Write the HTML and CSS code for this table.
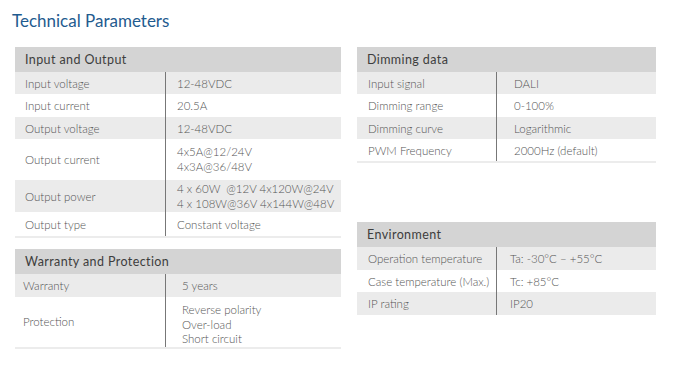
FILE: index.html
```html
<!DOCTYPE html>
<html>
<head>
<meta charset="utf-8">
<link rel="stylesheet" href="styles.css">
</head>
<body>
<div class="page">
  <h1 class="title">Technical Parameters</h1>
  <div class="cols">
    <div class="col left">
      <div class="table io">
        <div class="head">Input and Output</div>
        <div class="row"><div class="k">Input voltage</div><div class="v">12-48VDC</div></div>
        <div class="row r23"><div class="k">Input current</div><div class="v">20.5A</div></div>
        <div class="row"><div class="k">Output voltage</div><div class="v">12-48VDC</div></div>
        <div class="row two"><div class="k">Output current</div><div class="v"><span>4x5A@12/24V</span><span>4x3A@36/48V</span></div></div>
        <div class="row two tight"><div class="k">Output power</div><div class="v"><span>4 x 60W &nbsp;@12V 4x120W@24V</span><span>4 x 108W@36V 4x144W@48V</span></div></div>
        <div class="row r24"><div class="k">Output type</div><div class="v">Constant voltage</div></div>
      </div>
      <div class="table wp">
        <div class="head">Warranty and Protection</div>
        <div class="row r23"><div class="k">Warranty</div><div class="v">5 years</div></div>
        <div class="row three"><div class="k">Protection</div><div class="v"><span>Reverse polarity</span><span>Over-load</span><span>Short circuit</span></div></div>
      </div>
    </div>
    <div class="col right">
      <div class="table dim">
        <div class="head">Dimming data</div>
        <div class="row"><div class="k">Input signal</div><div class="v">DALI</div></div>
        <div class="row r23"><div class="k">Dimming range</div><div class="v">0-100%</div></div>
        <div class="row"><div class="k">Dimming curve</div><div class="v">Logarithmic</div></div>
        <div class="row"><div class="k">PWM Frequency</div><div class="v">2000Hz (default)</div></div>
      </div>
      <div class="table env">
        <div class="head">Environment</div>
        <div class="row r23"><div class="k">Operation temperature</div><div class="v">Ta: -30°C – +55°C</div></div>
        <div class="row"><div class="k">Case temperature (Max.)</div><div class="v">Tc: +85°C</div></div>
        <div class="row r23"><div class="k">IP rating</div><div class="v">IP20</div></div>
      </div>
    </div>
  </div>
</div>
</body>
</html>
```
FILE: styles.css
```css
html, body {
  margin: 0;
  padding: 0;
  background: #ffffff;
}
.page {
  padding: 10px 0 0 12px;
  font-family: "Lato", "Open Sans", sans-serif;
}
.title {
  margin: 0;
  font-size: 17px;
  line-height: 22px;
  font-weight: 400;
  color: #1f5b8f;
}
.cols {
  display: flex;
  gap: 16px;
  margin-top: 15px;
  padding-left: 3px;
}
.col {
  display: flex;
  flex-direction: column;
}
.left { width: 326px; }
.right { width: 299px; }
.table {
  border-bottom: 2px solid #ececec;
}
.head {
  height: 25px;
  background: #d4d4d4;
  display: flex;
  align-items: center;
  padding-left: 10px;
  font-size: 12.5px;
  letter-spacing: 0.4px;
  color: #3d3d3d;
}
.row {
  display: grid;
  grid-template-columns: 150px 1fr;
  min-height: 22px;
  font-size: 11.5px;
  font-weight: 300;
  color: #555555;
}
.row:nth-child(even) {
  background: #ebebeb;
}
.r23 { min-height: 23px; }
.r24 { min-height: 24px; }
.k {
  display: flex;
  align-items: center;
  padding-left: 10px;
}
.v {
  display: flex;
  flex-direction: column;
  justify-content: center;
  border-left: 1px solid #777777;
  padding-left: 11px;
  line-height: 15px;
}
.two .v { padding: 5px 0 6px 11px; }
.two.tight .v { padding: 1px 0 1px 11px; }
.wp { margin-top: 11px; }
.wp .row { grid-template-columns: 150px 1fr; }
.wp .k { padding-left: 8px; }
.wp .v { padding-left: 16px; }
.three .v { padding-top: 6px; padding-bottom: 0; line-height: 14.5px; }
.wp .three .v { padding-left: 16px; }
.dim .row, .env .row { grid-template-columns: 139px 1fr; }
.dim .k, .env .k { padding-left: 11px; }
.dim .v { padding-left: 17px; }
.env { margin-top: 59px; border-bottom: none; }
.env .v { padding-left: 13px; }
```
